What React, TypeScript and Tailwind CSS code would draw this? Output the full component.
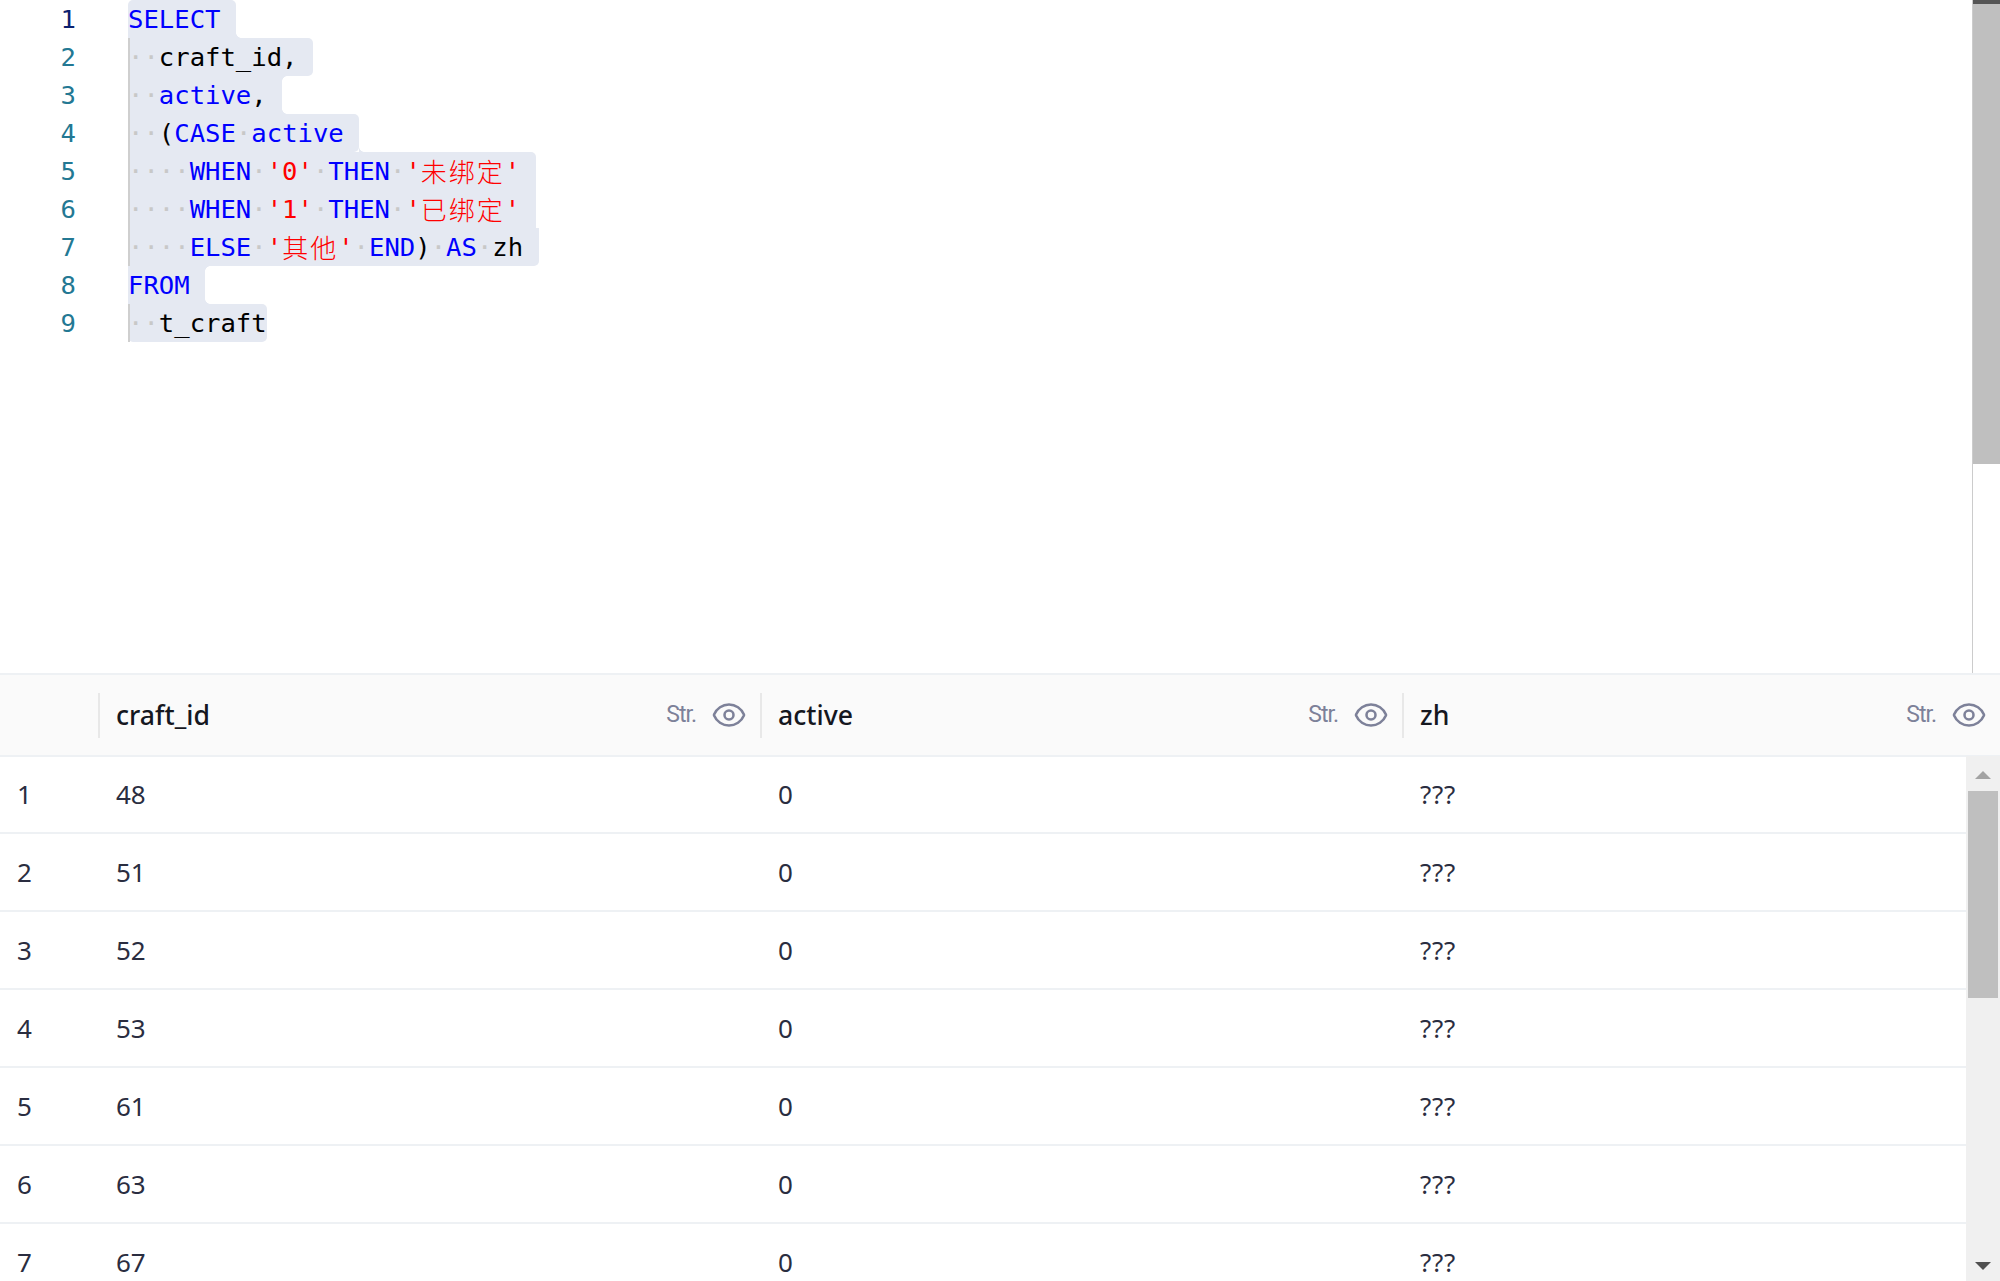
import { Eye } from "lucide-react";

type Tok = [("k" | "s" | "c" | "d" | "t"), string];

const tokenClass = {
  k: "text-[#0000ff]",
  s: "text-[#ff0000]",
  c: "text-[#ff0000] text-[26px] font-light tracking-[2px] -translate-y-px inline-block [font-family:'Noto_Sans_CJK_SC',sans-serif]",
  d: "text-[#c8c8c8]",
  t: "text-black",
};

// notch: inner corner where the next or previous line runs further right
const sql: { toks: Tok[]; radius: string; guide?: boolean; notchTop?: boolean; notchBottom?: boolean; noEol?: boolean }[] = [
  { toks: [["k", "SELECT"]], radius: "rounded-t-[5px]", notchBottom: true },
  { toks: [["d", "··"], ["t", "craft_id,"]], radius: "rounded-r-[5px]", guide: true },
  { toks: [["d", "··"], ["k", "active"], ["t", ","]], radius: "", guide: true, notchTop: true, notchBottom: true },
  { toks: [["d", "··"], ["t", "("], ["k", "CASE"], ["d", "·"], ["k", "active"]], radius: "rounded-r-[5px]", guide: true, notchBottom: true },
  {
    toks: [["d", "····"], ["k", "WHEN"], ["d", "·"], ["s", "'0'"], ["d", "·"], ["k", "THEN"], ["d", "·"], ["s", "'"], ["c", "未绑定"], ["s", "'"]],
    radius: "rounded-tr-[5px]",
    guide: true,
  },
  {
    toks: [["d", "····"], ["k", "WHEN"], ["d", "·"], ["s", "'1'"], ["d", "·"], ["k", "THEN"], ["d", "·"], ["s", "'"], ["c", "已绑定"], ["s", "'"]],
    radius: "",
    guide: true,
  },
  {
    toks: [["d", "····"], ["k", "ELSE"], ["d", "·"], ["s", "'"], ["c", "其他"], ["s", "'"], ["d", "·"], ["k", "END"], ["t", ")"], ["d", "·"], ["k", "AS"], ["d", "·"], ["t", "zh"]],
    radius: "rounded-br-[5px]",
    guide: true,
  },
  { toks: [["k", "FROM"]], radius: "", notchTop: true, notchBottom: true },
  { toks: [["d", "··"], ["t", "t_craft"]], radius: "rounded-r-[5px] rounded-bl-[5px]", guide: true, noEol: true },
];

const rows = [
  ["1", "48"],
  ["2", "51"],
  ["3", "52"],
  ["4", "53"],
  ["5", "61"],
  ["6", "63"],
  ["7", "67"],
];

const columns = ["craft_id", "active", "zh"];

function CodeEditor() {
  return (
    <div className="flex h-[673px] [font-family:'DejaVu_Sans_Mono',monospace] text-[25.6px]">
      <div className="flex-1">
        {sql.map((line, i) => (
          <div key={i} className="flex h-[38px] items-center">
            <div
              className={`w-[76px] text-right ${i === 0 ? "text-[#0b216f]" : "text-[#237893]"}`}
            >
              {i + 1}
            </div>
            <div
              className={`relative ml-[52px] flex h-[38px] items-center whitespace-pre bg-[#e5e9f2] ${line.noEol ? "" : "pr-[15.4px]"} ${line.radius}`}
            >
              {line.guide && <span className="absolute left-0 top-0 h-full w-[2px] bg-[#cfcfcf]" />}
              {line.notchTop && (
                <span className="absolute left-full top-0 size-[5px] bg-[radial-gradient(circle_at_100%_100%,transparent_4.5px,#e5e9f2_5px)]" />
              )}
              {line.notchBottom && (
                <span className="absolute bottom-0 left-full size-[5px] bg-[radial-gradient(circle_at_100%_0%,transparent_4.5px,#e5e9f2_5px)]" />
              )}
              {line.toks.map(([kind, text], j) => (
                <span key={j} className={tokenClass[kind]}>
                  {text}
                </span>
              ))}
            </div>
          </div>
        ))}
      </div>
      <div className="w-[28px] border-l border-[#cccccc]">
        <div className="h-[464px] border-t-[4px] border-[#555555] bg-[#bfbfbf]" />
      </div>
    </div>
  );
}

function ResultTable() {
  return (
    <div className="flex min-h-0 flex-1 flex-col [font-family:'Noto_Sans',sans-serif] text-[26px]">
      <div className="grid h-[84px] shrink-0 grid-cols-[98px_662px_642px_1fr] items-center border-y-2 border-[#eef1f4] bg-[#fafafa]">
        <div />
        {columns.map((name) => (
          <div key={name} className="flex h-[45px] items-center border-l-2 border-[#e8e8e8] pl-[16px] pr-[16px]">
            <span className="flex-1 pt-[2px] text-[26.6px] font-medium text-[#15171f]">{name}</span>
            <span className="mr-[18px] text-[23px] tracking-[-1px] text-[#7d8199] [font-family:Roboto,sans-serif]">
              Str.
            </span>
            <Eye size={36} strokeWidth={1.7} className="-mx-[3px] text-[#7d8199]" />
          </div>
        ))}
      </div>
      <div className="-mt-[1px] flex min-h-0 flex-1">
        <div className="min-w-0 flex-1">
          {rows.map(([num, id]) => (
            <div
              key={num}
              className="grid h-[78px] grid-cols-[98px_662px_642px_1fr] items-center border-b-2 border-[#eef1f4] text-[#2a2d40]"
            >
              <div className="pl-[17px]">{num}</div>
              <div className="pl-[18px]">{id}</div>
              <div className="pl-[18px]">0</div>
              <div className="pl-[18px] tracking-[0.7px]">???</div>
            </div>
          ))}
        </div>
        <div className="flex w-[34px] flex-col items-center bg-[#f0f0f0]">
          <svg width="16" height="8" viewBox="0 0 16 8" className="mt-[15px] shrink-0">
            <polygon points="8,0 16,8 0,8" fill="#a3a3a3" />
          </svg>
          <div className="mt-[12px] h-[207px] w-[30px] shrink-0 bg-[#bfbfbf]" />
          <svg width="16" height="8" viewBox="0 0 16 8" className="mb-[11px] mt-auto shrink-0">
            <polygon points="0,0 16,0 8,8" fill="#505050" />
          </svg>
        </div>
      </div>
    </div>
  );
}

export default function App() {
  return (
    <div className="flex h-[1281px] w-[2000px] flex-col overflow-hidden bg-white">
      <CodeEditor />
      <ResultTable />
    </div>
  );
}
